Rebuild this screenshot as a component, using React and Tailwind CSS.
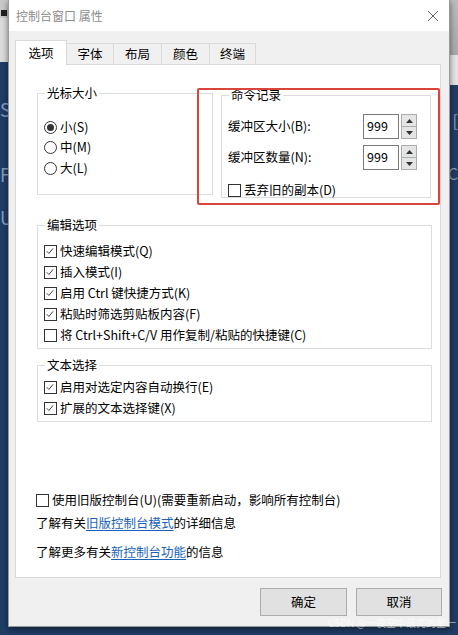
import React from "react";

const font = "font-['Noto_Sans_CJK_SC','Microsoft_YaHei',sans-serif]";

function CheckBox({ checked }) {
  return (
    <span className="relative inline-block w-[13px] h-[13px] border border-[#333] bg-white shrink-0">
      {checked && (
        <svg viewBox="0 0 13 13" className="absolute left-0 top-0 w-[11px] h-[11px]">
          <path d="M2 6.2 L4.6 8.8 L9.6 2.8" fill="none" stroke="#333" strokeWidth="1.1" />
        </svg>
      )}
    </span>
  );
}

function Radio({ checked }) {
  return (
    <span className="relative inline-flex items-center justify-center w-[13px] h-[13px] rounded-full border border-[#333] bg-white shrink-0">
      {checked && <span className="w-[7px] h-[7px] rounded-full bg-[#333]" />}
    </span>
  );
}

function Group({ label, className, children }) {
  return (
    <div className={`relative border border-[#dcdcdc] ${className}`}>
      <span className="absolute -top-[10px] left-[7px] bg-white px-[2px] text-[12.5px] leading-[18px] text-black">
        {label}
      </span>
      {children}
    </div>
  );
}

function Spin() {
  return (
    <div className="flex items-stretch h-[25px]">
      <div className="w-[36px] border border-[#7a7a7a] bg-white flex items-center pl-[3px] text-[12.5px] text-black">
        999
      </div>
      <div className="ml-[2px] w-[16px] flex flex-col">
        <div className="flex-1 border border-[#adadad] bg-[#e5e5e5] flex items-center justify-center">
          <svg viewBox="0 0 7 4" className="w-[7px] h-[4px]"><path d="M0 4 L3.5 0 L7 4 Z" fill="#333" /></svg>
        </div>
        <div className="flex-1 border border-t-0 border-[#adadad] bg-[#e5e5e5] flex items-center justify-center">
          <svg viewBox="0 0 7 4" className="w-[7px] h-[4px]"><path d="M0 0 L3.5 4 L7 0 Z" fill="#333" /></svg>
        </div>
      </div>
    </div>
  );
}

function Row({ children, checked, className = "" }) {
  return (
    <div className={`flex items-center gap-[3px] h-[21px] text-[12.5px] text-black ${className}`}>
      <CheckBox checked={checked} />
      <span>{children}</span>
    </div>
  );
}

export default function App() {
  return (
    <div className={`relative w-[458px] h-[635px] overflow-hidden bg-[#203d66] ${font}`}>
      {/* desktop behind the window */}
      <div className="absolute left-0 top-0 w-[8px] h-[18px] bg-[#c9c9c9]">
        <div className="absolute left-[1px] top-[10px] w-[6px] h-[6px] bg-[#222]" />
      </div>
      <div className="absolute left-0 top-[18px] w-[8px] h-[44px] bg-[#dcdcdc]" />
      <div className="absolute left-0 top-[100px] text-[18px] leading-none text-[#8a9bb8]">S</div>
      <div className="absolute left-0 top-[165px] text-[18px] leading-none text-[#8a9bb8]">F</div>
      <div className="absolute left-0 top-[208px] text-[18px] leading-none text-[#8a9bb8]">U</div>
      <div className="absolute right-0 top-0 w-[8px] h-[55px] bg-gradient-to-b from-[#bdbdbd] to-[#a9a9a9]" />
      <div className="absolute right-0 top-[55px] w-[8px] h-[30px] bg-[#e4e4e4]" />
      <div className="absolute right-0 top-[112px] text-[16px] leading-none text-[#8da0bd]">[</div>
      <div className="absolute right-0 top-[165px] text-[16px] leading-none text-[#8da0bd]">C</div>

      {/* window */}
      <div className="absolute left-[8px] top-0 w-[442px] h-[627px] bg-[#f0f0f0] border-x border-b border-[#9a9a9a] flex flex-col shadow-[0_2px_6px_rgba(0,0,0,0.5)]">
        {/* title bar */}
        <div className="h-[31px] bg-white flex items-center justify-between pl-[7px] pr-[10px] shrink-0">
          <span className="text-[12px] text-[#8c8c8c]">控制台窗口 属性</span>
          <svg viewBox="0 0 12 12" className="w-[12px] h-[12px]">
            <path d="M1 1 L11 11 M11 1 L1 11" stroke="#666" strokeWidth="1" />
          </svg>
        </div>

        {/* tabs */}
        <div className="mt-[9px] ml-[6px] flex items-end h-[25px] relative z-10 text-[12.5px] text-black">
          <div className="w-[52px] h-[25px] bg-white border border-b-0 border-[#d9d9d9] flex items-start justify-center pt-[3px]">选项</div>
          <div className="w-[47px] h-[22px] border border-l-0 border-[#d9d9d9] bg-[#f0f0f0] flex items-center justify-center">字体</div>
          <div className="w-[48px] h-[22px] border border-l-0 border-[#d9d9d9] bg-[#f0f0f0] flex items-center justify-center">布局</div>
          <div className="w-[48px] h-[22px] border border-l-0 border-[#d9d9d9] bg-[#f0f0f0] flex items-center justify-center">颜色</div>
          <div className="w-[46px] h-[22px] border border-l-0 border-[#d9d9d9] bg-[#f0f0f0] flex items-center justify-center">终端</div>
        </div>

        {/* panel */}
        <div className="relative ml-[6px] w-[426px] h-[514px] -mt-px bg-white border border-[#d9d9d9] pl-[21px] pt-[28px] flex flex-col">
          <div className="flex items-start gap-[8px]">
            <Group label="光标大小" className="w-[176px] h-[102px] pt-[23px] pl-[6px] flex flex-col">
              {[
                ["小(S)", true],
                ["中(M)", false],
                ["大(L)", false],
              ].map(([t, c]) => (
                <div key={t} className="flex items-center gap-[3px] h-[20.5px] text-[12.5px] text-black">
                  <Radio checked={c} />
                  <span>{t}</span>
                </div>
              ))}
            </Group>
            <Group label="命令记录" className="mt-[2px] w-[210px] h-[103px] pt-[18px] pl-[6px] pr-[13px] flex flex-col">
              <div className="flex items-center justify-between text-[12.5px] text-black">
                <span>缓冲区大小(B):</span>
                <Spin />
              </div>
              <div className="mt-[6px] flex items-center justify-between text-[12.5px] text-black">
                <span>缓冲区数量(N):</span>
                <Spin />
              </div>
              <Row className="mt-[11px]">丢弃旧的副本(D)</Row>
            </Group>
          </div>

          <Group label="编辑选项" className="mt-[27px] w-[395px] h-[124px] pt-[15px] pl-[6px] flex flex-col">
            <Row checked>快速编辑模式(Q)</Row>
            <Row checked>插入模式(I)</Row>
            <Row checked>启用 Ctrl 键快捷方式(K)</Row>
            <Row checked>粘贴时筛选剪贴板内容(F)</Row>
            <Row>将 Ctrl+Shift+C/V 用作复制/粘贴的快捷键(C)</Row>
          </Group>

          <Group label="文本选择" className="mt-[16px] w-[395px] h-[57px] pt-[11px] pl-[6px] flex flex-col">
            <Row checked>启用对选定内容自动换行(E)</Row>
            <Row checked>扩展的文本选择键(X)</Row>
          </Group>

          <div className="mt-[68px] flex items-center gap-[3px] h-[21px] -ml-px text-[12.5px] text-black">
            <CheckBox />
            <span>使用旧版控制台(U)(需要重新启动，影响所有控制台)</span>
          </div>
          <div className="mt-[2px] h-[21px] -ml-px flex items-center text-[12.5px] text-black">
            了解有关<span className="text-[#1a62b8] underline underline-offset-2">旧版控制台模式</span>的详细信息
          </div>
          <div className="mt-[8px] h-[21px] -ml-px flex items-center text-[12.5px] text-black">
            了解更多有关<span className="text-[#1a62b8] underline underline-offset-2">新控制台功能</span>的信息
          </div>

          {/* red annotation */}
          <div className="absolute left-[181px] top-[23px] w-[243px] h-[117px] border-2 border-[#d9453b] rounded-[2px] pointer-events-none" />
        </div>

        {/* buttons */}
        <div className="mt-[10px] flex justify-end gap-[9px] pr-[7px] text-[12.5px] text-black">
          <div className="w-[87px] h-[28px] bg-[#e1e1e1] border border-[#adadad] flex items-center justify-center">确定</div>
          <div className="w-[86px] h-[28px] bg-[#e1e1e1] border border-[#adadad] flex items-center justify-center">取消</div>
        </div>
      </div>

      <div className="absolute right-[2px] top-[616px] text-[10px] leading-[13px] text-white/60 whitespace-nowrap">
        CSDN @一夜空中最亮的星一
      </div>
    </div>
  );
}
